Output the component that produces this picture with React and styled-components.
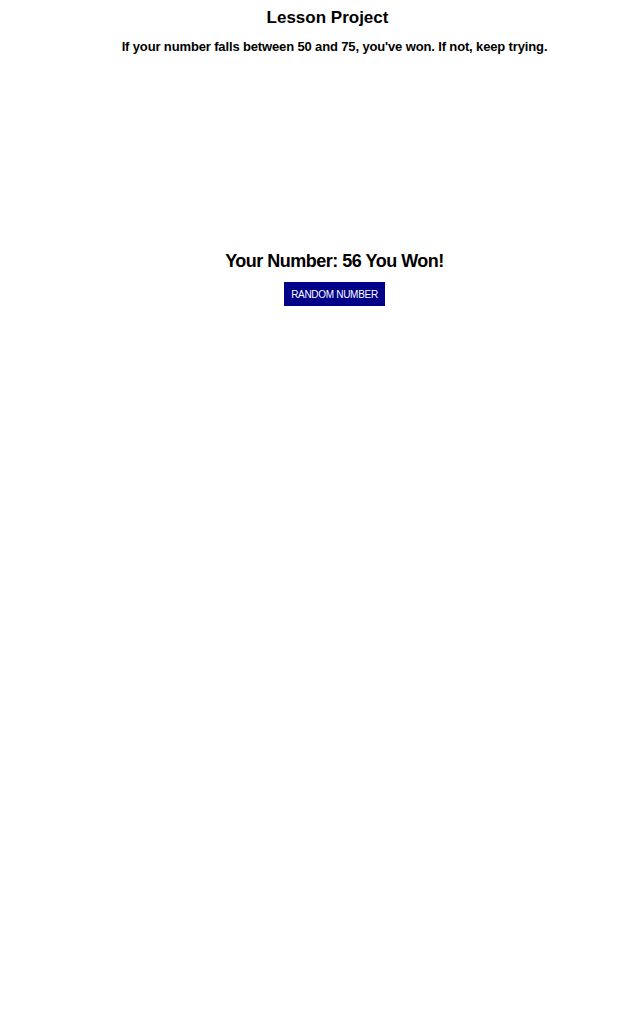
import React, { useState } from "react";
import styled, { createGlobalStyle } from "styled-components";

const Global = createGlobalStyle`
  html, body { margin: 0; padding: 0; background: #fff; }
  body { font-family: "Liberation Sans", Arial, sans-serif; color: #000; }
`;

const Page = styled.div`
  display: flex;
  flex-direction: column;
  align-items: center;
  padding-top: 8px;
`;

const Title = styled.h1`
  margin: 0 0 0 12px;
  font-size: 17px;
  font-weight: bold;
  line-height: 20px;
`;

const Subtitle = styled.h3`
  margin: 11px 0 0 26px;
  font-size: 13px;
  letter-spacing: -0.14px;
  font-weight: bold;
  line-height: 16px;
`;

const Result = styled.section`
  display: flex;
  flex-direction: column;
  align-items: center;
  margin: 195px 0 0 26px;
  gap: 10px;
`;

const Number = styled.h2`
  margin: 0;
  font-size: 18px;
  letter-spacing: -0.5px;
  font-weight: bold;
  line-height: 22px;
`;

const Button = styled.button`
  background: #000088;
  color: #fff;
  border: none;
  height: 24px;
  padding: 0 7px;
  font-family: "Liberation Sans", Arial, sans-serif;
  font-size: 10px;
  letter-spacing: -0.3px;
  cursor: pointer;
`;

export default function App() {
  const [n, setN] = useState(56);
  const won = n >= 50 && n <= 75;
  return (
    <>
      <Global />
      <Page>
        <Title>Lesson Project</Title>
        <Subtitle>If your number falls between 50 and 75, you've won. If not, keep trying.</Subtitle>
        <Result>
          <Number>Your Number: {n} {won ? "You Won!" : "Keep Trying"}</Number>
          <Button onClick={() => setN(Math.floor(Math.random() * 100) + 1)}>RANDOM NUMBER</Button>
        </Result>
      </Page>
    </>
  );
}
